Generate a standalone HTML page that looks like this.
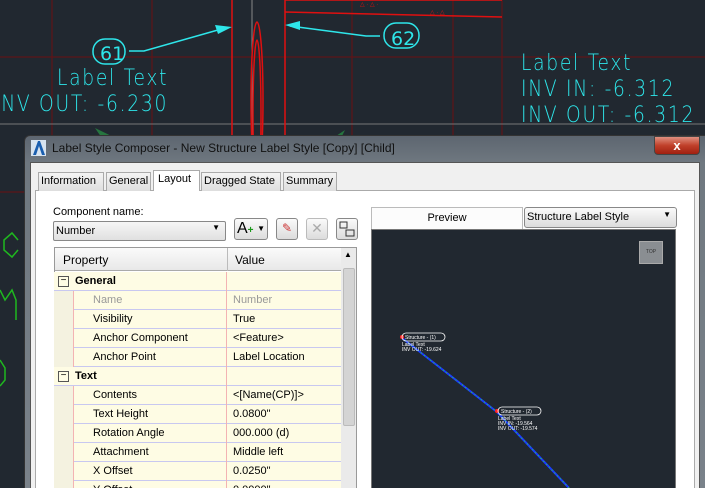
<!DOCTYPE html>
<html><head><meta charset="utf-8"><style>
*{margin:0;padding:0;box-sizing:border-box}
html,body{width:705px;height:488px;overflow:hidden}
body{background:#212830;position:relative;font-family:"Liberation Sans",sans-serif;font-size:11px;color:#000}
.abs{position:absolute}
.cad{font-family:"DejaVu Sans",sans-serif;color:#2ee6ea;font-size:22px;letter-spacing:2px;transform:scaleX(0.85);transform-origin:left top;white-space:nowrap;font-weight:200}
.row{position:absolute;left:54px;width:287px;height:19px;border-bottom:1px solid #c8c8f0;background:#fefce4}
.row .p{position:absolute;left:39px;top:3px}
.row .v{position:absolute;left:179px;top:3px}
.row .g{position:absolute;left:0;top:0;width:19px;height:19px;background:#f4f2e0}
.row .sep{position:absolute;left:172px;top:0;width:1px;height:19px;background:#f3b3b3}
.row .ls{position:absolute;left:19px;top:0;width:1px;height:19px;background:#f3b3b3}
.cat{font-weight:bold}
.btn{position:absolute;top:218px;height:22px;border:1px solid #888;border-radius:3px;background:linear-gradient(#fafafa,#dcdcdc)}
.tab{position:absolute;top:172px;height:19px;border:1px solid #aaa;border-bottom:none;background:linear-gradient(#f4f4f4,#dedede);padding:2px 2px;font-size:11px;white-space:nowrap;overflow:hidden}
</style></head><body>
<svg class="abs" style="left:0;top:0" width="705" height="488">
<g stroke="#6b0f12" stroke-width="1" fill="none">
<line x1="52" y1="0" x2="52" y2="488"/><line x1="152" y1="0" x2="152" y2="140"/>
<line x1="352" y1="0" x2="352" y2="135"/><line x1="453" y1="0" x2="453" y2="135"/><line x1="502" y1="0" x2="502" y2="135"/>
<line x1="0" y1="57" x2="705" y2="57"/><line x1="0" y1="192" x2="30" y2="192"/>
</g>
<line x1="0" y1="124" x2="705" y2="124" stroke="#777" />
<line x1="252" y1="0" x2="252" y2="135" stroke="#888"/>
<g stroke="#e01010" stroke-width="1.5" fill="none">
<line x1="232" y1="0" x2="232" y2="135"/><line x1="285" y1="0" x2="285" y2="135"/>
<ellipse cx="257" cy="100" rx="6" ry="78"/><ellipse cx="257" cy="115" rx="4" ry="75"/>
<line x1="285" y1="12" x2="502" y2="17"/><line x1="285" y1="0" x2="502" y2="0"/>
</g>
<g fill="#e01010" font-size="6"><text x="360" y="6">△ ·  △  ·</text><text x="430" y="14">△  ·  △</text></g>
<g stroke="#2ee6ea" stroke-width="1.5" fill="none">
<rect x="93" y="39" width="32" height="25" rx="12"/><rect x="384" y="23" width="35" height="25" rx="12"/>
<path d="M129 51 L144 51 L225 28"/><path d="M380 36 L366 36 L290 26"/>
</g>
<path d="M232 27 L215 25 L218 34Z" fill="#2ee6ea"/><path d="M285 25 L300 21 L300 30Z" fill="#2ee6ea"/>
<g fill="#2ee6ea" font-family="DejaVu Sans" font-size="19"><text x="100" y="60">61</text><text x="391" y="45">62</text></g>
<g stroke="#1fb81f" stroke-width="1.5" fill="none">
<path d="M18 240 L12 233 L4 240 L4 250 L12 257 L18 250"/><path d="M0 290 L5 300 L12 290 L16 300 L16 320"/>
<path d="M0 360 L5 368 L5 380 L0 386"/>
</g>
<path d="M95 128 L130 145 L110 150Z" fill="#2aa84a" opacity=".6"/>
<path d="M345 130 L315 150 L335 150Z" fill="#2aa84a" opacity=".6"/>
</svg>
<div class="abs cad" style="left:57px;top:66px">Label Text</div>
<div class="abs cad" style="left:-6px;top:92px">INV OUT: -6.230</div>
<div class="abs cad" style="left:521px;top:51px">Label Text</div>
<div class="abs cad" style="left:521px;top:77px">INV IN: -6.312</div>
<div class="abs cad" style="left:521px;top:103px">INV OUT: -6.312</div>

<div class="abs" style="left:24px;top:135px;width:700px;height:360px;background:linear-gradient(180deg,#5d6670 0,#6f7880 27px,#7a828a 100%);border:1px solid #333;border-radius:6px 6px 0 0"></div>
<div class="abs" style="left:31px;top:140px;width:15px;height:16px;background:#d8e4f0"><svg width="15" height="16"><path d="M2 15 L7 1 L9 1 L14 15 L11 15 L8 6 L5 15Z" fill="#1a5fb0"/></svg></div>
<div class="abs" style="left:52px;top:141px;font-size:12px;color:#111">Label Style Composer - New Structure Label Style [Copy] [Child]</div>
<div class="abs" style="left:654px;top:136px;width:46px;height:19px;border:1px solid #444;border-radius:0 0 4px 4px;background:linear-gradient(#e09080,#c0402a 50%,#a02010);color:#fff;font-weight:bold;text-align:center;font-size:13px;line-height:17px">x</div>
<div class="abs" style="left:30px;top:162px;width:670px;height:330px;background:#f0f0f0;border:1px solid #555"></div>
<div class="abs" style="left:35px;top:190px;width:660px;height:300px;background:#fff;border:1px solid #aaa"></div>
<div class="tab" style="left:38px;width:66px">Information</div>
<div class="tab" style="left:106px;width:45px">General</div>
<div class="tab" style="left:153px;top:170px;height:21px;width:47px;background:#fff;padding-left:4px">Layout</div>
<div class="tab" style="left:201px;width:80px">Dragged State</div>
<div class="tab" style="left:283px;width:54px">Summary</div>

<div class="abs" style="left:53px;top:206px">Component name:</div>
<div class="abs" style="left:53px;top:221px;width:173px;height:20px;border:1px solid #888;border-radius:2px;background:linear-gradient(#f6f6f6,#e0e0e0);padding:3px 2px">Number<span style="position:absolute;right:5px;top:1px;font-size:8px">▼</span></div>
<div class="btn" style="left:234px;width:34px;font-size:16px;padding-left:2px;line-height:19px">A<span style="color:#1a9a1a;font-size:10px;font-weight:bold">+</span><span style="position:absolute;right:2px;top:0;font-size:8px">▼</span></div>
<div class="btn" style="left:276px;width:22px;text-align:center;color:#c33;font-size:12px;line-height:19px">✎</div>
<div class="btn" style="left:306px;width:22px;text-align:center;color:#aaa;font-size:14px;line-height:19px;border-color:#bbb">✕</div>
<div class="btn" style="left:336px;width:22px"><svg width="20" height="20"><rect x="3" y="3" width="7" height="6" fill="none" stroke="#333"/><rect x="9" y="11" width="8" height="6" fill="none" stroke="#333"/></svg></div>

<div class="abs" style="left:54px;top:247px;width:303px;height:245px;border:1px solid #999;background:#fff"></div>
<div class="abs" style="left:55px;top:248px;width:286px;height:23px;background:linear-gradient(#fafafa,#e8e8e8);border-bottom:1px solid #aaa"><span style="position:absolute;left:8px;top:5px;font-size:12px">Property</span><span style="position:absolute;left:172px;top:0;width:1px;height:23px;background:#bbb"></span><span style="position:absolute;left:180px;top:5px;font-size:12px">Value</span></div>
<div class="abs" style="left:341px;top:248px;width:15px;height:240px;background:#eaeaea"></div>
<div class="abs" style="left:343px;top:268px;width:12px;height:158px;background:#d4d4d4;border:1px solid #bbb;border-radius:2px"></div>
<div class="abs" style="left:344px;top:250px;font-size:8px">▲</div>

<div class="row" style="top:272px"><span class="p cat" style="left:21px">General</span><span class="sep"></span><span style="position:absolute;left:4px;top:4px;width:11px;height:11px;border:1px solid #555;font-size:10px;line-height:8px;text-align:center">−</span></div>
<div class="row" style="top:291px"><span class="g"></span><span class="ls"></span><span class="p" style="color:#999">Name</span><span class="sep"></span><span class="v" style="color:#999">Number</span></div>
<div class="row" style="top:310px"><span class="g"></span><span class="ls"></span><span class="p">Visibility</span><span class="sep"></span><span class="v">True</span></div>
<div class="row" style="top:329px"><span class="g"></span><span class="ls"></span><span class="p">Anchor Component</span><span class="sep"></span><span class="v">&lt;Feature&gt;</span></div>
<div class="row" style="top:348px"><span class="g"></span><span class="ls"></span><span class="p">Anchor Point</span><span class="sep"></span><span class="v">Label Location</span></div>
<div class="row" style="top:367px"><span class="p cat" style="left:21px">Text</span><span class="sep"></span><span style="position:absolute;left:4px;top:4px;width:11px;height:11px;border:1px solid #555;font-size:10px;line-height:8px;text-align:center">−</span></div>
<div class="row" style="top:386px"><span class="g"></span><span class="ls"></span><span class="p">Contents</span><span class="sep"></span><span class="v">&lt;[Name(CP)]&gt;</span></div>
<div class="row" style="top:405px"><span class="g"></span><span class="ls"></span><span class="p">Text Height</span><span class="sep"></span><span class="v">0.0800"</span></div>
<div class="row" style="top:424px"><span class="g"></span><span class="ls"></span><span class="p">Rotation Angle</span><span class="sep"></span><span class="v">000.000 (d)</span></div>
<div class="row" style="top:443px"><span class="g"></span><span class="ls"></span><span class="p">Attachment</span><span class="sep"></span><span class="v">Middle left</span></div>
<div class="row" style="top:462px"><span class="g"></span><span class="ls"></span><span class="p">X Offset</span><span class="sep"></span><span class="v">0.0250"</span></div>
<div class="row" style="top:481px"><span class="g"></span><span class="ls"></span><span class="p">Y Offset</span><span class="sep"></span><span class="v">0.0000"</span></div>

<div class="abs" style="left:371px;top:207px;width:152px;height:22px;border:1px solid #bbb;border-bottom:none;background:#fcfcfc;text-align:center;padding-top:4px">Preview</div>
<div class="abs" style="left:524px;top:207px;width:153px;height:21px;border:1px solid #888;border-radius:3px;background:linear-gradient(#fafafa,#dcdcdc);padding:3px 2px">Structure Label Style<span style="position:absolute;right:5px;top:2px;font-size:8px">▼</span></div>
<div class="abs" style="left:371px;top:229px;width:305px;height:260px;background:#212830;border:1px solid #777"></div>
<div class="abs" style="left:639px;top:241px;width:24px;height:23px;background:#8a8e92;border:1px solid #aaa;color:#333;font-size:5px;text-align:center;line-height:21px">TOP</div>
<svg class="abs" style="left:371px;top:229px" width="305" height="260">
<path d="M31 109 L126 183 L198 259" stroke="#1a3cff" stroke-width="2" fill="none"/>
<path d="M31 109 L126 183 L198 259" stroke="#2de02d" stroke-width="1" stroke-dasharray="1 3" fill="none"/>
<circle cx="31" cy="108" r="2" fill="#f22"/><circle cx="126" cy="182" r="2" fill="#f22"/>
<rect x="31" y="104" width="43" height="8" rx="4" fill="none" stroke="#fff" stroke-width=".8"/>
<rect x="127" y="178" width="43" height="8" rx="4" fill="none" stroke="#fff" stroke-width=".8"/>
<g fill="#fff" font-size="5"><text x="34" y="110">Structure - (1)</text><text x="31" y="117">Label Text</text><text x="31" y="122">INV OUT: -19.624</text>
<text x="130" y="184">Structure - (2)</text><text x="127" y="191">Label Text</text><text x="127" y="196">INV IN: -19.564</text><text x="127" y="201">INV OUT: -19.574</text></g>
</svg>
</body></html>
